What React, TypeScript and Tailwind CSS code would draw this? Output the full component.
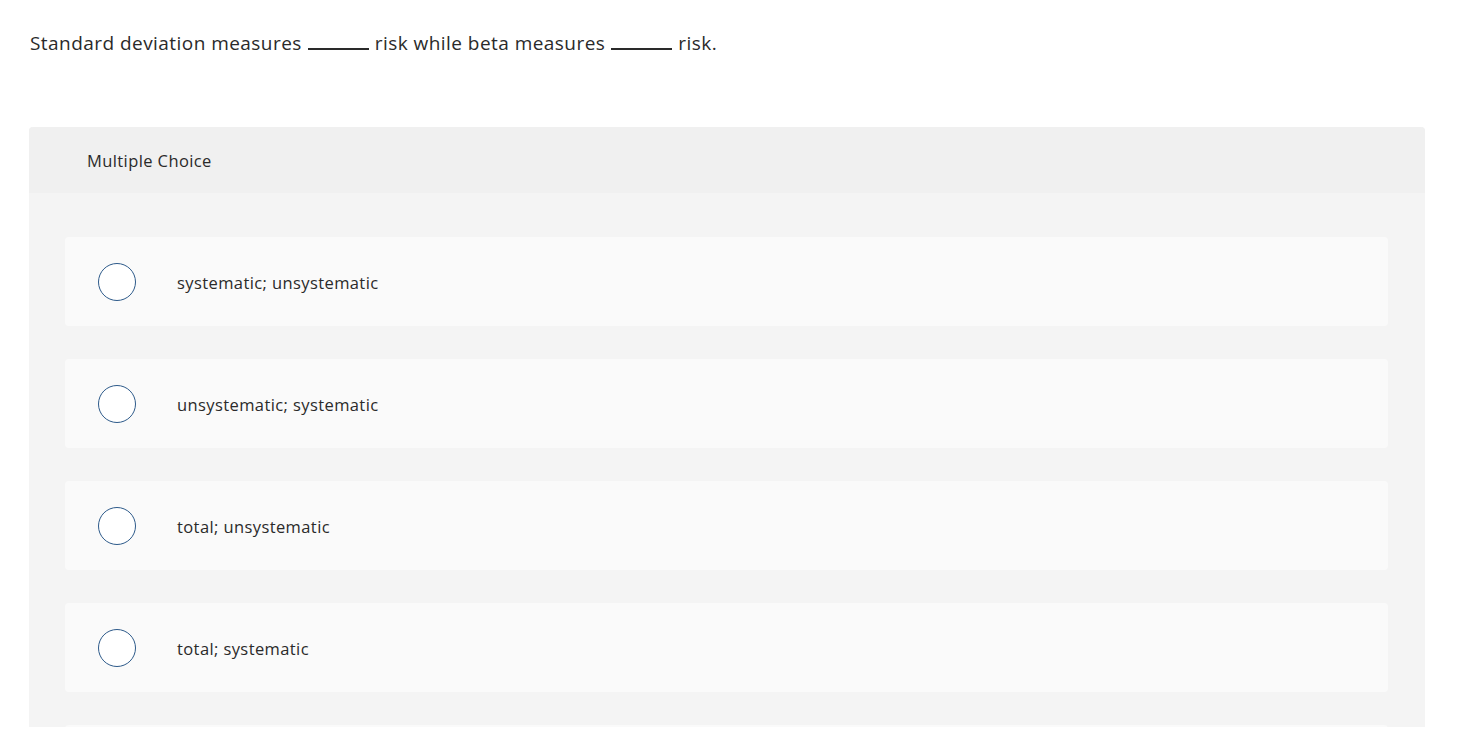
import React from "react";

const options = [
  "systematic; unsystematic",
  "unsystematic; systematic",
  "total; unsystematic",
  "total; systematic",
  "",
];

function Blank() {
  return <span className="inline-block w-[61px] h-[2px] bg-[#2a2a2a] align-baseline mx-[6px]" />;
}

export default function App() {
  return (
    <div
      className="w-[1471px] h-[745px] bg-white overflow-hidden"
      style={{ fontFamily: "'Open Sans', 'Noto Sans', sans-serif" }}
    >
      <div className="pl-[30px] pt-[30px] text-[19px] leading-[26px] tracking-[0.45px] text-[#2a2a2a]">
        Standard deviation measures<Blank />risk while beta measures<Blank />risk.
      </div>
      <div className="mt-[71px] ml-[29px] w-[1396px] h-[600px] rounded-t-[4px] overflow-hidden bg-[#f4f4f4]">
        <div className="h-[66px] bg-[#f0f0f0] flex items-center pl-[58px] pt-[2px] text-[16.5px] tracking-[0.4px] text-[#2a2a2a]">
          Multiple Choice
        </div>
        <div className="pt-[44px] pl-[36px] pr-[37px] flex flex-col gap-[33px]">
          {options.map((o, i) => (
            <div
              key={i}
              className="h-[89px] shrink-0 rounded-[4px] bg-[#fafafa] flex items-center pl-[33px]"
            >
              <div className="w-[38px] h-[38px] rounded-full border border-[#2d5a8a] bg-white shrink-0" />
              <div className="ml-[41px] pt-[3px] text-[16.5px] tracking-[0.4px] text-[#2a2a2a]">{o}</div>
            </div>
          ))}
        </div>
      </div>
    </div>
  );
}
